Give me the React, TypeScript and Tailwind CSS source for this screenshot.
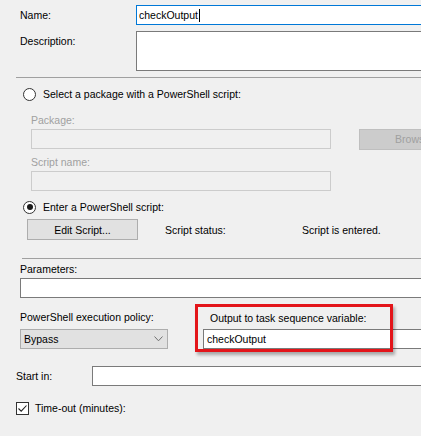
import React from "react";

function Radio({ checked }: { checked?: boolean }) {
  return (
    <div className="flex h-[13px] w-[13px] shrink-0 items-center justify-center rounded-full border border-[#333333] bg-white">
      {checked && <div className="h-[6px] w-[6px] rounded-full bg-[#1a1a1a]" />}
    </div>
  );
}

export default function App() {
  return (
    <div className="h-[440px] w-[428px] bg-white font-['Liberation_Sans',Arial,sans-serif] text-[10.5px] leading-[14px] text-black">
      <div className="relative h-[436px] w-[421px] overflow-hidden bg-[#f0f0f0] pt-[5px]">
        {/* Name */}
        <div className="flex h-[20px] items-center">
          <div className="w-[136px] shrink-0 pl-[20px]">Name:</div>
          <div className="flex h-[20px] w-[300px] shrink-0 items-center border border-[#0078d7] bg-white pl-[2px]">
            <span>checkOutput</span>
            <span className="ml-px h-[13px] w-px bg-black" />
          </div>
        </div>
        {/* Description */}
        <div className="mt-[6px] flex h-[40px] items-start">
          <div className="w-[136px] shrink-0 pl-[20px] pt-[3px]">Description:</div>
          <div className="h-[40px] w-[300px] shrink-0 border border-[#7a7a7a] bg-white" />
        </div>
        {/* Separator */}
        <div className="ml-[16px] mt-[6px] h-px w-[405px] bg-[#a0a0a0]" />
        {/* Radio 1 */}
        <div className="mt-[8px] flex h-[16px] items-center pl-[23px]">
          <Radio />
          <span className="ml-[7px]">Select a package with a PowerShell script:</span>
        </div>
        <div className="mt-[11px] pl-[31px] text-[#a0a0a0]">Package:</div>
        <div className="mt-[2px] flex h-[20px] items-center pl-[31px]">
          <div className="h-[20px] w-[300px] shrink-0 border border-[#cccccc] bg-[#f0f0f0]" />
          <div className="ml-[28px] flex h-[21px] w-[116px] shrink-0 items-center justify-center border border-[#bfbfbf] bg-[#cccccc] text-[#a0a0a0]">
            Browse...
          </div>
        </div>
        <div className="mt-[6px] pl-[31px] text-[#a0a0a0]">Script name:</div>
        <div className="mt-[2px] pl-[31px]">
          <div className="h-[20px] w-[300px] border border-[#cccccc] bg-[#f0f0f0]" />
        </div>
        {/* Radio 2 */}
        <div className="mt-[8px] flex h-[16px] items-center pl-[23px]">
          <Radio checked />
          <span className="ml-[7px]">Enter a PowerShell script:</span>
        </div>
        <div className="mt-[4px] flex h-[21px] items-center pl-[27px]">
          <div className="flex h-[21px] w-[111px] shrink-0 items-center justify-center border border-[#adadad] bg-[#e1e1e1]">
            Edit Script...
          </div>
          <span className="ml-[27px] w-[137px] shrink-0">Script status:</span>
          <span>Script is entered.</span>
        </div>
        {/* Separator */}
        <div className="ml-[22px] mt-[18px] h-px w-[399px] bg-[#a0a0a0]" />
        <div className="mt-[3px] pl-[20px]">Parameters:</div>
        <div className="ml-[20px] mt-[2px] h-[20px] w-[420px] border border-[#7a7a7a] bg-white" />
        {/* Policy / output row */}
        <div className="relative mt-[6px] flex h-[48px]">
          <div className="w-[168px] shrink-0 pl-[20px]">
            <div className="mt-[6px]">PowerShell execution policy:</div>
            <div className="mt-[5px] flex h-[20px] w-[148px] items-center justify-between border border-[#adadad] bg-[#e1e1e1] pl-[3px] pr-[4px]">
              <span>Bypass</span>
              <svg width="9" height="6" viewBox="0 0 9 6">
                <path d="M0.5 0.5 L4.5 4.8 L8.5 0.5" fill="none" stroke="#707070" strokeWidth="1" />
              </svg>
            </div>
          </div>
          <div className="ml-[35px] shrink-0">
            <div className="mt-[7px] pl-[7px]">Output to task sequence variable:</div>
            <div className="mt-[4px] flex h-[20px] w-[230px] items-center border border-[#7a7a7a] bg-white pl-[3px]">
              checkOutput
            </div>
          </div>
          <div className="absolute left-[195px] top-0 h-[48px] w-[198px] border-[3px] border-[#e3151a] shadow-[2px_3px_3px_rgba(0,0,0,0.3)]" />
        </div>
        {/* Start in */}
        <div className="mt-[14px] flex h-[20px] items-center pl-[16px]">
          <span className="w-[76px] shrink-0">Start in:</span>
          <div className="h-[20px] w-[340px] shrink-0 border border-[#7a7a7a] bg-white" />
        </div>
        {/* Time-out */}
        <div className="mt-[14px] flex h-[16px] items-center pl-[16px]">
          <div className="flex h-[13px] w-[13px] shrink-0 items-center justify-center border border-[#333333] bg-white">
            <svg width="11" height="11" viewBox="0 0 11 11">
              <path d="M1.5 5.5 L4.2 8.2 L9.5 2.5" fill="none" stroke="#222" strokeWidth="1.1" />
            </svg>
          </div>
          <span className="ml-[6px]">Time-out (minutes):</span>
        </div>
      </div>
    </div>
  );
}
